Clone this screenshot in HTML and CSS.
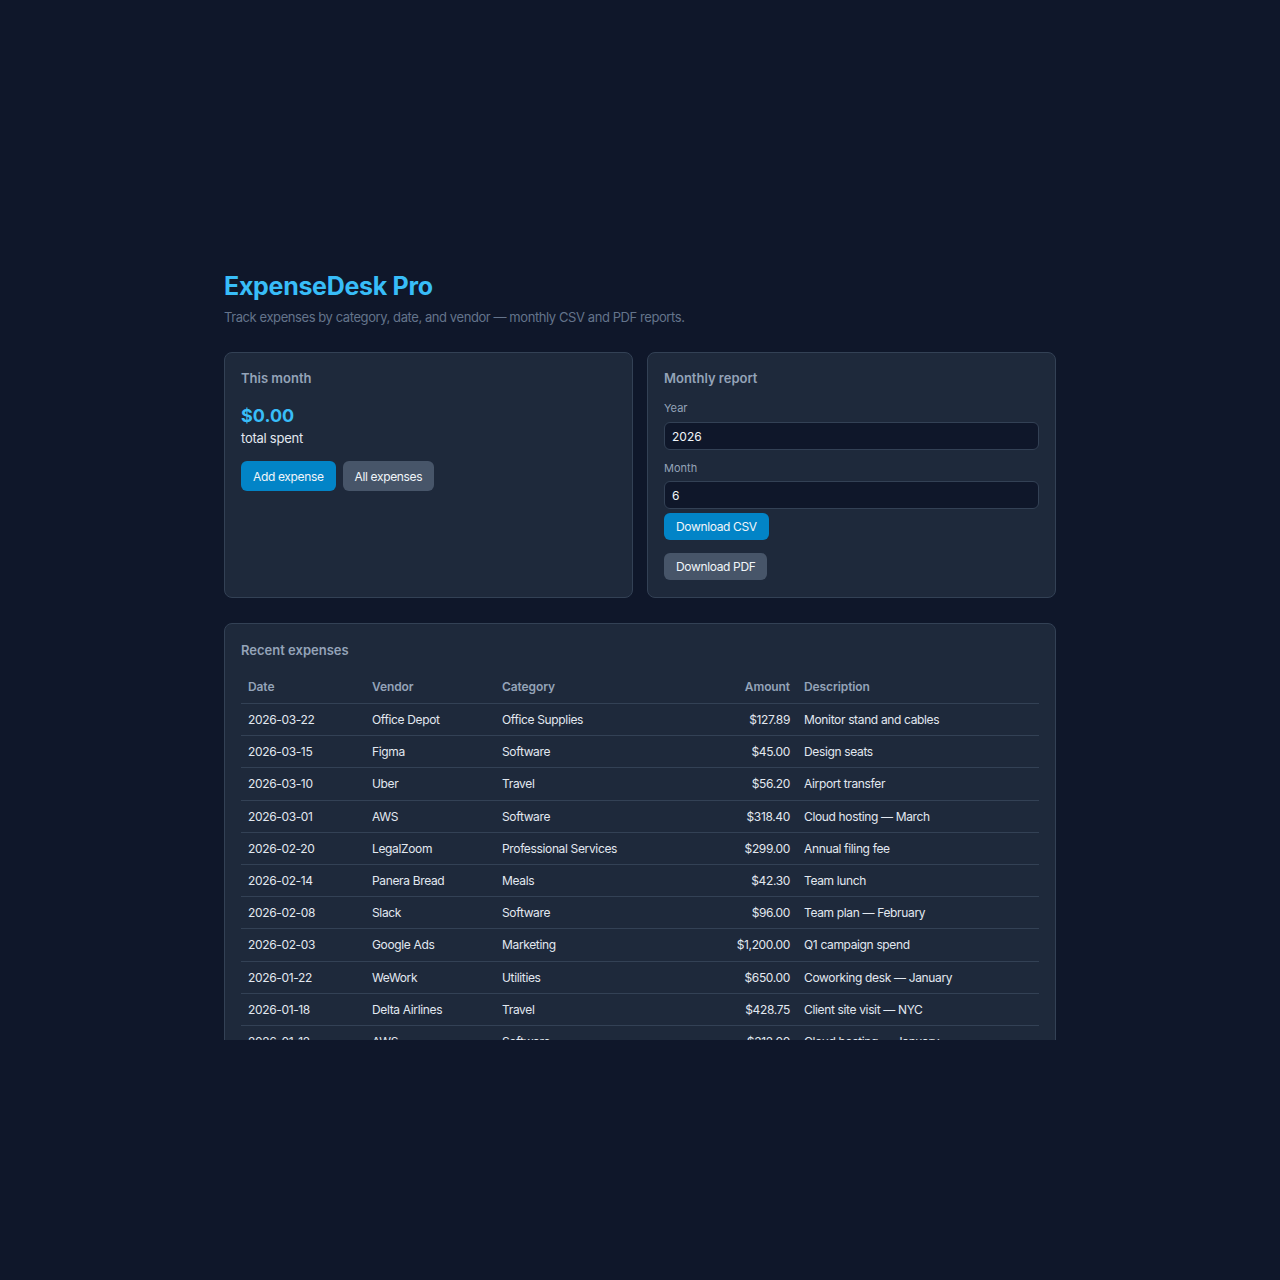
FILE: index.html
```html
<!DOCTYPE html>
<html>
<head>
  <title>ExpenseDesk Pro</title>
  <link rel="stylesheet" href="styles.css">
</head>
<body>
  <div class="viewport">
    <main class="app">
      <header class="app-head">
        <h1>ExpenseDesk Pro</h1>
        <p class="tagline">Track expenses by category, date, and vendor — monthly CSV and PDF reports.</p>
      </header>

      <section class="grid">
        <div class="card">
          <h3>This month</h3>
          <div class="total">$0.00</div>
          <div class="total-label">total spent</div>
          <div class="actions">
            <button class="btn primary">Add expense</button>
            <button class="btn secondary">All expenses</button>
          </div>
        </div>

        <div class="card">
          <h3>Monthly report</h3>
          <form class="report-form">
            <label for="year">Year</label>
            <input type="text" id="year" value="2026">
            <label for="month">Month</label>
            <input type="text" id="month" value="6">
            <div><button type="button" class="btn primary small csv-btn">Download CSV</button></div>
            <div><button type="button" class="btn secondary small pdf-btn">Download PDF</button></div>
          </form>
        </div>
      </section>

      <section class="card recent">
        <h3>Recent expenses</h3>
        <table class="expenses">
          <thead>
            <tr>
              <th class="c-date">Date</th>
              <th class="c-vendor">Vendor</th>
              <th class="c-cat">Category</th>
              <th class="num">Amount</th>
              <th class="c-desc">Description</th>
            </tr>
          </thead>
          <tbody id="expenseRows"></tbody>
        </table>
      </section>
    </main>
  </div>

  <script>
    const expenses = [
      ['2026-03-22', 'Office Depot', 'Office Supplies', 127.89, 'Monitor stand and cables'],
      ['2026-03-15', 'Figma', 'Software', 45.00, 'Design seats'],
      ['2026-03-10', 'Uber', 'Travel', 56.20, 'Airport transfer'],
      ['2026-03-01', 'AWS', 'Software', 318.40, 'Cloud hosting — March'],
      ['2026-02-20', 'LegalZoom', 'Professional Services', 299.00, 'Annual filing fee'],
      ['2026-02-14', 'Panera Bread', 'Meals', 42.30, 'Team lunch'],
      ['2026-02-08', 'Slack', 'Software', 96.00, 'Team plan — February'],
      ['2026-02-03', 'Google Ads', 'Marketing', 1200.00, 'Q1 campaign spend'],
      ['2026-01-22', 'WeWork', 'Utilities', 650.00, 'Coworking desk — January'],
      ['2026-01-18', 'Delta Airlines', 'Travel', 428.75, 'Client site visit — NYC'],
      ['2026-01-12', 'AWS', 'Software', 312.00, 'Cloud hosting — January'],
      ['2026-01-05', 'Staples', 'Office Supplies', 64.15, 'Printer paper and toner']
    ];

    function money(n) {
      return '$' + n.toLocaleString('en-US', { minimumFractionDigits: 2, maximumFractionDigits: 2 });
    }

    const body = document.getElementById('expenseRows');
    expenses.forEach(e => {
      const tr = document.createElement('tr');
      tr.innerHTML = `
        <td>${e[0]}</td>
        <td>${e[1]}</td>
        <td>${e[2]}</td>
        <td class="num">${money(e[3])}</td>
        <td>${e[4]}</td>
      `;
      body.appendChild(tr);
    });
  </script>
</body>
</html>
```

FILE: styles.css
```css
* {
  box-sizing: border-box;
}
body {
  margin: 0;
  background: #0f172a;
  color: #e2e8f0;
  font-family: Inter, "Noto Sans", Arial, sans-serif;
}
/* the app sits in a fixed-height frame; the table runs past its bottom */
.viewport {
  height: 1040px;
  overflow: hidden;
}
.app {
  width: 832px;
  margin: 0 auto;
  padding-top: 270px;
}
.app-head h1 {
  margin: 0;
  font-size: 25px;
  line-height: 32px;
  font-weight: 700;
  color: #38bdf8;
  letter-spacing: -0.3px;
}
.tagline {
  margin: 6px 0 0;
  font-size: 13px;
  line-height: 18px;
  color: #64748b;
  letter-spacing: -0.42px;
}
.grid {
  display: grid;
  grid-template-columns: 1fr 1fr;
  gap: 14px;
  margin-top: 26px;
}
.card {
  background: #1e293b;
  border: 1px solid #334155;
  border-radius: 8px;
  padding: 16px;
}
.grid .card {
  padding-bottom: 17px;
}
.card h3 {
  margin: 0;
  font-size: 13px;
  line-height: 18px;
  font-weight: 600;
  color: #94a3b8;
}
.total {
  margin-top: 17px;
  font-size: 18px;
  line-height: 24px;
  font-weight: 700;
  color: #38bdf8;
}
.total-label {
  font-size: 13px;
  line-height: 20px;
  color: #e2e8f0;
  letter-spacing: -0.25px;
}
.actions {
  display: flex;
  gap: 7px;
  margin-top: 13px;
}
.btn {
  border: none;
  border-radius: 6px;
  padding: 0 12px;
  height: 30px;
  font-family: inherit;
  font-size: 12px;
  letter-spacing: -0.35px;
  color: #f1f5f9;
  cursor: pointer;
}
.btn.small {
  height: 27px;
}
.primary {
  background: #0284c7;
}
.secondary {
  background: #475569;
}
.report-form label {
  display: block;
  margin-top: 11px;
  font-size: 11px;
  line-height: 14px;
  color: #94a3b8;
}
.report-form label:first-child {
  margin-top: 14px;
}
.report-form input {
  display: block;
  width: 100%;
  height: 28px;
  margin-top: 6px;
  padding: 0 7px;
  background: #0f172a;
  border: 1px solid #334155;
  border-radius: 6px;
  font-family: inherit;
  font-size: 12px;
  color: #f1f5f9;
}
.report-form label:first-child + input {
  margin-top: 7px;
}
.csv-btn {
  margin-top: 4px;
}
.pdf-btn {
  margin-top: 13px;
}
.recent {
  margin-top: 25px;
}
.recent h3 {
  line-height: 20px;
  margin-bottom: 11px;
}
.expenses {
  width: 100%;
  border-collapse: collapse;
  font-size: 12px;
}
.expenses th {
  text-align: left;
  font-weight: 600;
  color: #94a3b8;
  padding: 8px 7px;
  line-height: 16px;
  border-bottom: 1px solid #334155;
  letter-spacing: -0.1px;
}
.expenses td {
  padding: 8px 7px;
  line-height: 15.2px;
  border-bottom: 1px solid #334155;
  letter-spacing: -0.35px;
}
.expenses .num {
  text-align: right;
}
.c-date { width: 124px; }
.c-vendor { width: 130px; }
.c-cat { width: 162px; }
.c-desc { width: 242px; }
```
